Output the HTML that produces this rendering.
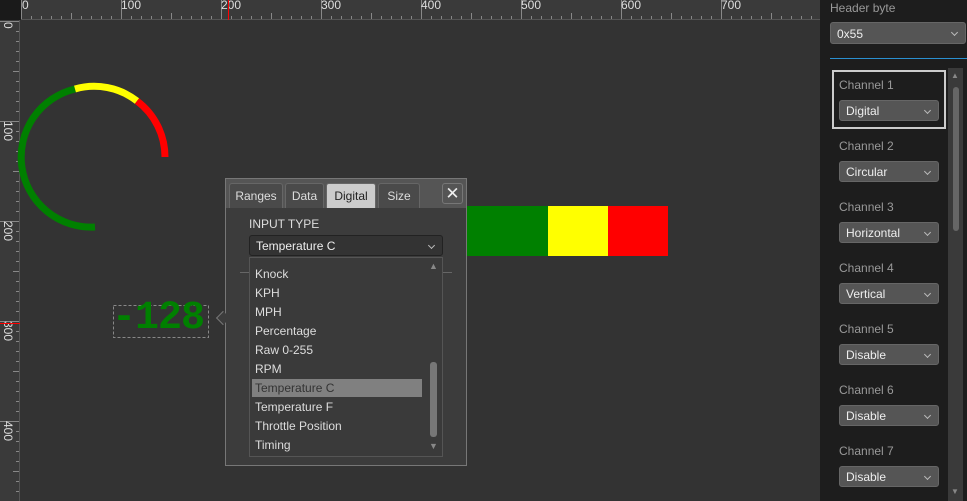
<!DOCTYPE html>
<html><head><meta charset="utf-8"><style>
*{margin:0;padding:0;box-sizing:border-box}
body{width:967px;height:501px;background:#333;position:relative;overflow:hidden;font-family:"Liberation Sans","DejaVu Sans",sans-serif;font-size:12px;color:#ddd}
.abs{position:absolute}
#corner{left:0;top:0;width:21px;height:20px;background:#1a1a1a}
#rtop{left:21px;top:0;width:799px;height:20px;background:#3a3a3a;border-bottom:1px solid #555;
background-image:
linear-gradient(to right,#888 1px,transparent 1px),
linear-gradient(to right,#888 1px,transparent 1px),
linear-gradient(to right,#888 1px,transparent 1px);
background-size:100px 20px,50px 7px,10px 4px;background-position:0 0,0 13px,0 16px;background-repeat:repeat-x}
#rleft{left:0;top:20px;width:20px;height:481px;background:#3a3a3a;border-right:1px solid #555;
background-image:
linear-gradient(to bottom,#888 1px,transparent 1px),
linear-gradient(to bottom,#888 1px,transparent 1px),
linear-gradient(to bottom,#888 1px,transparent 1px);
background-size:20px 100px,7px 50px,4px 10px;background-position:0 1px,13px 1px,16px 1px;background-repeat:repeat-y}
.tl{position:absolute;top:-2px;font-size:12px;color:#ddd}
.ll{position:absolute;font-size:12px;color:#ddd;transform:rotate(90deg);transform-origin:0 0;left:15px}
#side{left:820px;top:0;width:147px;height:501px;background:#1d1d1d}
.sel{position:absolute;background:#555;border:1px solid #666;border-radius:3px;color:#eee;font-size:12px;padding:3px 6px;height:21px}
.sel:after{content:"";position:absolute;right:8px;top:7px;width:4px;height:4px;border-right:1px solid #bbb;border-bottom:1px solid #bbb;transform:rotate(45deg)}
.chl{position:absolute;left:839px;color:#999;font-size:12px}
.item{position:absolute;left:255px;color:#ddd;font-size:12px}
.tab{position:absolute;top:183px;height:25px;background:#4a4a4a;border:1px solid #666;border-bottom:none;border-radius:3px 3px 0 0;color:#ddd;text-align:center;padding-top:5px;font-size:12px}
</style></head><body>
<div class="abs" id="corner"></div>
<div class="abs" id="rtop">
<span class="tl" style="left:1px">0</span><span class="tl" style="left:100px">100</span><span class="tl" style="left:200px">200</span><span class="tl" style="left:300px">300</span><span class="tl" style="left:400px">400</span><span class="tl" style="left:500px">500</span><span class="tl" style="left:600px">600</span><span class="tl" style="left:700px">700</span>
<div class="abs" style="left:207px;top:0;width:1px;height:20px;background:#f00"></div>
</div>
<div class="abs" id="rleft">
<span class="ll" style="top:2px">0</span><span class="ll" style="top:101px">100</span><span class="ll" style="top:201px">200</span><span class="ll" style="top:301px">300</span><span class="ll" style="top:401px">400</span>
<div class="abs" style="left:0;top:303px;width:20px;height:1px;background:#f00"></div>
</div>

<svg class="abs" style="left:0;top:0" width="820" height="501">
<path d="M95 227 A70 70 0 0 1 75 89" fill="none" stroke="#008000" stroke-width="7"/>
<path d="M75 89 A70 70 0 0 1 137 101" fill="none" stroke="#ffff00" stroke-width="7"/>
<path d="M137 101 A70 70 0 0 1 165 157" fill="none" stroke="#ff0000" stroke-width="7"/>
<rect x="440" y="206" width="108" height="50" fill="#008000"/>
<rect x="548" y="206" width="60" height="50" fill="#ffff00"/>
<rect x="608" y="206" width="60" height="50" fill="#ff0000"/>
<rect x="113.5" y="305.5" width="95" height="32" fill="none" stroke="#888" stroke-dasharray="3,2"/>
</svg>
<div class="abs" style="left:112px;top:300px;font-family:'Liberation Mono',monospace;font-weight:bold;font-size:40px;color:#008000;line-height:38px;letter-spacing:-1px">-128</div>

<!-- popup -->
<div class="abs" style="left:225px;top:178px;width:242px;height:288px;background:#3c3c3c;border:1px solid #777"></div>
<div class="abs" style="left:226px;top:179px;width:240px;height:29px;background:#555"></div>
<div class="abs" style="left:218px;top:313px;width:10px;height:10px;background:#3c3c3c;border-left:1px solid #777;border-bottom:1px solid #777;transform:rotate(45deg)"></div>
<div class="tab" style="left:229px;width:54px">Ranges</div>
<div class="tab" style="left:285px;width:39px">Data</div>
<div class="tab" style="left:326px;width:50px;background:#ccc;color:#222">Digital</div>
<div class="tab" style="left:378px;width:42px">Size</div>
<div class="abs" style="left:442px;top:183px;width:21px;height:21px;border:1px solid #777;border-radius:3px;background:#555;color:#eee;font-weight:bold;font-size:17px;text-align:center;line-height:19px">✕</div>
<div class="abs" style="left:249px;top:217px;color:#ddd;font-size:12px">INPUT TYPE</div>
<div class="abs" style="left:240px;top:272px;width:212px;height:1px;background:#666"></div>
<div class="sel" style="left:249px;top:235px;width:194px;background:#333;border-color:#222;border-radius:3px">Temperature C</div>
<div class="abs" style="left:249px;top:257px;width:194px;height:200px;background:#3a3a3a;border:1px solid #555"></div>
<div class="abs" style="left:252px;top:379px;width:170px;height:18px;background:#808080"></div>
<div class="abs" style="left:430px;top:362px;width:7px;height:75px;background:#777;border-radius:3px"></div>
<div class="abs" style="left:429px;top:261px;color:#888;font-size:9px">▲</div>
<div class="abs" style="left:429px;top:441px;color:#888;font-size:9px">▼</div>
<div class="item" style="top:267px">Knock</div>
<div class="item" style="top:286px">KPH</div>
<div class="item" style="top:305px">MPH</div>
<div class="item" style="top:324px">Percentage</div>
<div class="item" style="top:343px">Raw 0-255</div>
<div class="item" style="top:362px">RPM</div>
<div class="item" style="top:381px;color:#333">Temperature C</div>
<div class="item" style="top:400px">Temperature F</div>
<div class="item" style="top:419px">Throttle Position</div>
<div class="item" style="top:438px">Timing</div>

<!-- sidebar -->
<div class="abs" id="side"></div>
<div class="abs" style="left:830px;top:1px;color:#999;font-size:12px">Header byte</div>
<div class="sel" style="left:830px;top:22px;width:136px;height:22px;padding-top:4px">0x55</div>
<div class="abs" style="left:830px;top:58px;width:137px;height:1px;background:#2a8fd0"></div>
<div class="abs" style="left:948px;top:68px;width:15px;height:433px;background:#3a3a3a"></div>
<div class="abs" style="left:953px;top:87px;width:6px;height:144px;background:#666;border-radius:3px"></div>
<div class="abs" style="left:951px;top:71px;color:#888;font-size:8px">▲</div>
<div class="abs" style="left:951px;top:487px;color:#888;font-size:8px">▼</div>
<div class="abs" style="left:832px;top:70px;width:114px;height:59px;border:2px solid #ccc"></div>
<div class="chl" style="top:78px">Channel 1</div><div class="sel" style="left:839px;top:100px;width:100px">Digital</div>
<div class="chl" style="top:139px">Channel 2</div><div class="sel" style="left:839px;top:161px;width:100px">Circular</div>
<div class="chl" style="top:200px">Channel 3</div><div class="sel" style="left:839px;top:222px;width:100px">Horizontal</div>
<div class="chl" style="top:261px">Channel 4</div><div class="sel" style="left:839px;top:283px;width:100px">Vertical</div>
<div class="chl" style="top:322px">Channel 5</div><div class="sel" style="left:839px;top:344px;width:100px">Disable</div>
<div class="chl" style="top:383px">Channel 6</div><div class="sel" style="left:839px;top:405px;width:100px">Disable</div>
<div class="chl" style="top:444px">Channel 7</div><div class="sel" style="left:839px;top:466px;width:100px">Disable</div>
</body></html>
